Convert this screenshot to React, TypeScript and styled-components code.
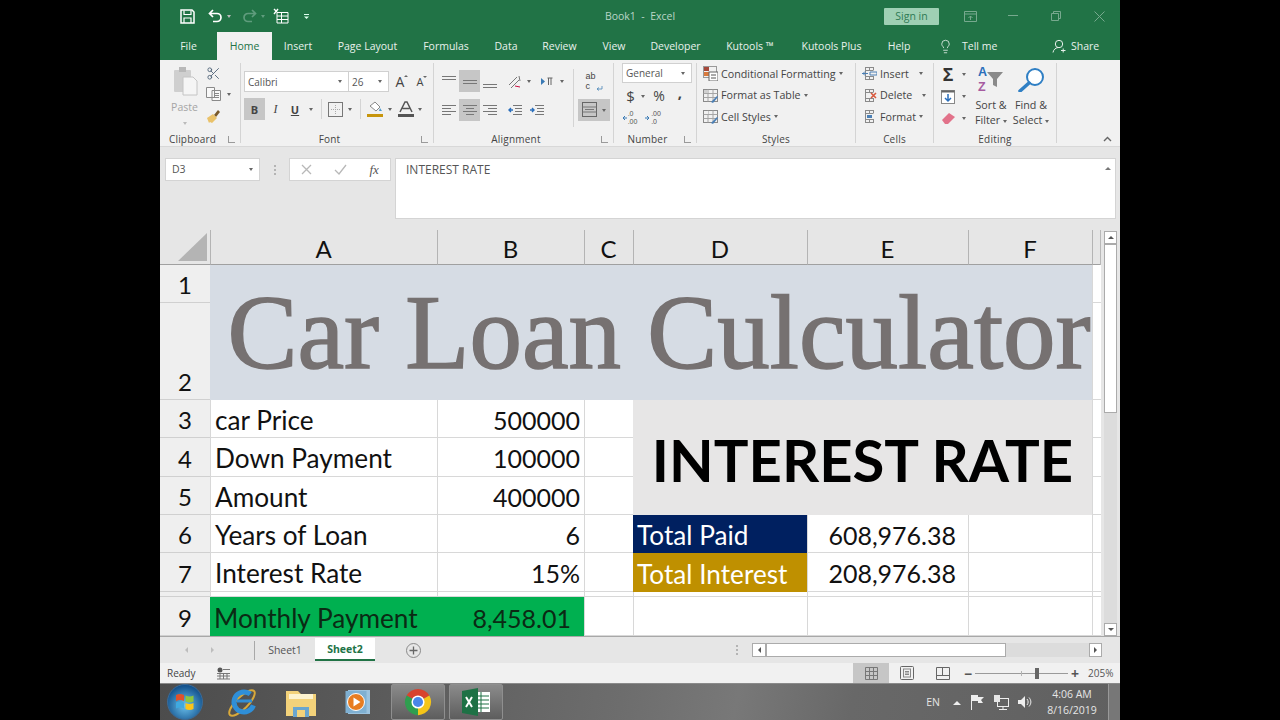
import React from "react";
import styled, { createGlobalStyle } from "styled-components";
import { Lightbulb, Scissors } from "lucide-react";

const GlobalStyle = createGlobalStyle`
html, body {
  margin: 0;
  padding: 0;
  background: #000;
  overflow: hidden;
}
`;

const UI_FONT = `"Open Sans", "Noto Sans", sans-serif`;
const CELL_FONT = `Lato, "Open Sans", sans-serif`;

const Ico = ({ w, h = w, vb, children }: { w: number; h?: number; vb?: string; children: React.ReactNode }) => (
  <svg width={w} height={h} viewBox={vb ?? `0 0 ${w} ${h}`} fill="none" style={{ display: "block", flex: "none" }}>
    {children}
  </svg>
);

const ALIGN_ICONS: Record<string, number[][]> = {
  top: [[0, 14, 2], [0, 14, 5]],
  middle: [[0, 14, 6], [0, 14, 9]],
  bottom: [[0, 14, 10], [0, 14, 13]],
  left: [[0, 14, 2], [0, 9, 5], [0, 14, 8], [0, 9, 11]],
  center: [[0, 14, 2], [3, 11, 5], [0, 14, 8], [3, 11, 11]],
  right: [[0, 14, 2], [5, 14, 5], [0, 14, 8], [5, 14, 11]],
};

const AlignIcon = ({ kind }: { kind: string }) => (
  <Ico w={14} h={14}>
    {ALIGN_ICONS[kind].map(([a, b, y]) => (
      <line key={y} x1={a} x2={b} y1={y + 0.5} y2={y + 0.5} stroke="#777" />
    ))}
  </Ico>
);

const StyleIcon = ({ accent }: { accent: string }) => (
  <Ico w={15} h={15}>
    <rect x="0.5" y="1.5" width="14" height="12" stroke="#8a8a8a" />
    <path d="M0.5 5.5h14M5 1.5v12M10 1.5v12M.5 9.5h14" stroke="#a5a5a5" />
    <rect x="1" y="2" width="4" height="3" fill={accent} />
    <path d="M8 14l6-6 1 1-5 6z" fill="#4a7fb5" />
  </Ico>
);

const CellsIcon = ({ kind }: { kind: string }) => (
  <Ico w={15} h={15}>
    <path d="M3.5 1.5h8M3.5 4.5h8M3.5 10.5h8M3.5 13.5h8M3.5 1v13M7.5 1v3M11.5 1v3M7.5 10v4M11.5 10v4" stroke="#8a8a8a" />
    {kind === "insert" && <path d="M0 7.5h6M3 5.5L1 7.5l2 2M8 6h7v3H8z" stroke="#4a7fb5" />}
    {kind === "delete" && <path d="M9 5l5 5M14 5l-5 5" stroke="#d9593d" strokeWidth="1.6" />}
    {kind === "format" && <rect x="5" y="6" width="5" height="3" fill="#4a7fb5" />}
  </Ico>
);

const Indent = ({ flip }: { flip?: boolean }) => (
  <Ico w={15} h={12}>
    <path d="M6 1.5h9M8 4.5h7M8 7.5h7M6 10.5h9" stroke="#777" />
    <path d={flip ? "M1 6h4M3 4l2 2-2 2" : "M2 6h4M4 4L2 6l2 2"} stroke="#2a6ebb" strokeWidth="1.4" />
  </Ico>
);

const Caret = styled.span<{ $light?: boolean; $mx?: number; $inline?: boolean }>`
flex: none;
display: ${p => (p.$inline ? "inline-block" : "block")};
vertical-align: middle;
width: 0;
height: 0;
margin: 0 ${p => p.$mx ?? 0}px;
border-left: 2.5px solid transparent;
border-right: 2.5px solid transparent;
border-top: 3px solid ${p => (p.$light ? "#bbb" : "#666")};
`;

const Page = styled.div`
display: flex;
justify-content: center;
width: 1280px;
height: 720px;
background: #000;
`;

const Screen = styled.div`
display: flex;
flex-direction: column;
width: 960px;
height: 720px;
background: #e6e6e6;
font-family: ${UI_FONT};
overflow: hidden;
`;

const TitleBar = styled.div`
display: grid;
grid-template-columns: 1fr auto 1fr;
align-items: center;
height: 32px;
background: #217346;
color: #b9d6c6;
font-size: 10.5px;
`;

const Quick = styled.div`
display: flex;
align-items: center;
gap: 5px;
padding-left: 20px;
`;

const QuickBtn = styled.div<{ $ml: number; $w?: number }>`
display: flex;
align-items: center;
justify-content: center;
width: ${p => p.$w ?? 14}px;
height: 16px;
margin-left: ${p => p.$ml}px;
`;

const WindowControls = styled.div`
display: flex;
align-items: center;
justify-content: flex-end;
`;

const SignIn = styled.div`
display: flex;
align-items: center;
justify-content: center;
width: 55px;
height: 17px;
margin-right: 9px;
background: #9fd0b4;
border-radius: 1px;
color: #2f7a55;
font-size: 10.5px;
`;

const WinBtn = styled.div<{ $w: number }>`
display: flex;
align-items: center;
justify-content: center;
width: ${p => p.$w}px;
height: 28px;
`;

const Tabs = styled.div`
display: flex;
align-items: stretch;
height: 28px;
background: #217346;
`;

const Tab = styled.div<{ $w: number; $on?: boolean }>`
display: flex;
align-items: center;
justify-content: center;
width: ${p => p.$w}px;
background: ${p => (p.$on ? "#f1f1f1" : "transparent")};
color: ${p => (p.$on ? "#217346" : "#e8f1ec")};
font-size: 10.5px;
white-space: nowrap;
`;

const ShareBox = styled.div`
display: flex;
align-items: center;
gap: 5px;
margin-left: 39px;
color: #e8f1ec;
font-size: 10.5px;
`;

const TellMe = styled(ShareBox)`
width: 75px;
margin-left: 14px;
gap: 9px;
`;

const Ribbon = styled.div`
display: flex;
height: 87px;
background: #f1f1f1;
border-bottom: 1px solid #d8d8d8;
box-sizing: border-box;
color: #444;
font-size: 10.5px;
`;

const Group = styled.div<{ $w: number; $flat?: boolean }>`
position: relative;
display: flex;
flex-direction: column;
width: ${p => p.$w}px;
height: 80px;
margin-top: 3px;
box-sizing: border-box;
border-right: ${p => (p.$flat ? "none" : "1px solid #d4d4d4")};
`;

const GroupBody = styled.div<{ $pl?: number; $gap?: number }>`
display: flex;
flex: none;
height: 66px;
gap: ${p => p.$gap ?? 0}px;
padding-left: ${p => p.$pl ?? 0}px;
`;

const GroupLabel = styled.div<{ $launcher?: boolean }>`
height: 14px;
margin-top: 3px;
padding-right: ${p => (p.$launcher ? 15 : 0)}px;
line-height: 14px;
text-align: center;
font-size: 10px;
letter-spacing: 0.2px;
color: #444;
`;

const Launcher = styled.span`
position: absolute;
right: 5px;
bottom: 0;
width: 6px;
height: 6px;
border-left: 1px solid #9a9a9a;
border-bottom: 1px solid #9a9a9a;
`;

const Column = styled.div<{ $w?: number; $gap?: number; $pt?: number; $center?: boolean; $ml?: number }>`
display: flex;
flex-direction: column;
align-items: ${p => (p.$center ? "center" : "stretch")};
width: ${p => (p.$w ? `${p.$w}px` : "auto")};
gap: ${p => p.$gap ?? 0}px;
padding-top: ${p => p.$pt ?? 0}px;
margin-left: ${p => p.$ml ?? 0}px;
`;

const Row = styled.div<{ $h?: number; $gap?: number; $mt?: number }>`
display: flex;
align-items: center;
height: ${p => p.$h ?? 22}px;
gap: ${p => p.$gap ?? 0}px;
margin-top: ${p => p.$mt ?? 0}px;
`;

const Btn = styled.div<{ $w: number; $on?: boolean; $h?: number; $ml?: number }>`
display: flex;
align-items: center;
justify-content: center;
flex: none;
gap: 4px;
width: ${p => p.$w}px;
height: ${p => p.$h ?? 22}px;
margin-left: ${p => p.$ml ?? 0}px;
background: ${p => (p.$on ? "#c6c6c6" : "transparent")};
`;

const PasteLabel = styled.div`
display: flex;
flex-direction: column;
align-items: center;
gap: 8px;
margin-top: 4px;
color: #a5a5a5;
font-size: 10.5px;
`;

const Combo = styled.div<{ $w: number; $h?: number; $joined?: boolean }>`
display: flex;
align-items: center;
justify-content: space-between;
width: ${p => p.$w}px;
height: ${p => p.$h ?? 21}px;
padding: 0 6px 0 3px;
box-sizing: border-box;
background: #fff;
border: 1px solid #d0d0d0;
${p => (p.$joined ? "border-left: none;" : "")}
color: #555;
font-size: 10px;
`;

const FontLetter = styled.span<{ $c?: string; $fs?: number; $w?: number; $i?: boolean; $u?: boolean; $serif?: boolean; $mb?: number }>`
color: ${p => p.$c ?? "#444"};
font-family: ${p => (p.$serif ? `"Liberation Serif", serif` : UI_FONT)};
font-size: ${p => p.$fs ?? 12}px;
font-weight: ${p => p.$w ?? 400};
font-style: ${p => (p.$i ? "italic" : "normal")};
text-decoration: ${p => (p.$u ? "underline" : "none")};
line-height: 1;
margin-bottom: ${p => p.$mb ?? 0}px;
`;

const GrowFont = styled.div`
position: relative;
display: flex;
justify-content: center;
`;

const GrowMark = styled.span<{ $down?: boolean }>`
position: absolute;
top: 0;
right: -4px;
width: 0;
height: 0;
border-left: 2px solid transparent;
border-right: 2px solid transparent;
${p => (p.$down ? "border-top: 2px solid #666;" : "border-bottom: 2px solid #666;")}
`;

const RibbonSep = styled.span<{ $mx?: number; $tall?: boolean }>`
flex: none;
width: 1px;
height: ${p => (p.$tall ? 58 : 20)}px;
margin: ${p => (p.$tall ? 6 : 0)}px ${p => p.$mx ?? 0}px 0;
background: #d4d4d4;
`;

const Stack = styled.div<{ $fs: number; $lh: number; $c?: string; $w?: number }>`
display: flex;
flex-direction: column;
flex: none;
color: ${p => p.$c ?? "#444"};
font-family: "Liberation Sans", sans-serif;
font-size: ${p => p.$fs}px;
font-weight: ${p => p.$w ?? 400};
line-height: ${p => p.$lh}px;
`;

const WrapIcon = styled.div`
display: flex;
align-items: flex-end;
gap: 1px;
`;

const DecIcon = styled.div`
display: flex;
align-items: center;
gap: 1px;
`;

const SortIcon = styled.div`
display: flex;
align-items: center;
height: 25px;
`;

const SortLetter = styled.span<{ $c: string }>`
display: block;
color: ${p => p.$c};
`;

const ListItem = styled.div`
display: flex;
align-items: center;
gap: 3px;
height: 21.5px;
white-space: nowrap;
color: #444;
font-size: 10.7px;
`;

const BigLabel = styled.div`
margin-top: 6px;
line-height: 15px;
text-align: center;
white-space: nowrap;
color: #444;
font-size: 10.7px;
`;

const Collapse = styled.span`
position: absolute;
right: 8px;
bottom: 1px;
`;

const FormulaArea = styled.div`
display: flex;
align-items: flex-start;
height: 83px;
padding-top: 11px;
box-sizing: border-box;
background: #e6e6e6;
`;

const NameBox = styled.div`
display: flex;
align-items: center;
justify-content: space-between;
width: 95px;
height: 23px;
margin-left: 5px;
padding: 0 6px 1px;
box-sizing: border-box;
background: #fff;
border: 1px solid #d4d4d4;
color: #555;
font-size: 10.5px;
`;

const GripDots = styled.div`
display: flex;
flex-direction: column;
align-items: center;
justify-content: center;
gap: 2px;
width: 29px;
height: 23px;
`;

const Dot = styled.span`
width: 2px;
height: 2px;
background: #b4b4b4;
`;

const FormulaButtons = styled.div`
display: flex;
align-items: center;
justify-content: space-around;
width: 102px;
height: 23px;
box-sizing: border-box;
background: #fff;
border: 1px solid #d4d4d4;
`;

const FormulaInput = styled.div`
position: relative;
width: 721px;
height: 61px;
margin-left: 4px;
padding: 2px 10px;
box-sizing: border-box;
background: #fff;
border: 1px solid #d4d4d4;
color: #555;
font-size: 12px;
`;

const FormulaCaret = styled.span`
position: absolute;
top: 8px;
right: 4px;
width: 0;
height: 0;
border-left: 3px solid transparent;
border-right: 3px solid transparent;
border-bottom: 3px solid #777;
`;

const SheetArea = styled.div`
display: flex;
height: 406px;
`;

const Grid = styled.div`
display: grid;
grid-template-columns: 50px 227px 147px 49px 174px 161px 124px 8px;
grid-template-rows: 35px 38px 97px 38px 39px 38px 38px 39px 5px 39px;
width: 941px;
background: #fff;
border-right: 1px solid #b8b8b8;
box-sizing: border-box;
`;

const Corner = styled.div`
display: flex;
align-items: flex-end;
justify-content: flex-end;
padding: 0 3px 3px 0;
background: #e6e6e6;
border-bottom: 1px solid #a0a0a0;
box-sizing: border-box;
`;

const Triangle = styled.span`
width: 29px;
height: 28px;
background: #b4b4b4;
clip-path: polygon(100% 0, 100% 100%, 0 100%);
`;

const ColHead = styled.div`
display: flex;
align-items: center;
justify-content: center;
box-sizing: border-box;
padding: 3px 1px 0 0;
background: #e6e6e6;
border-bottom: 1px solid #a0a0a0;
border-left: 1px solid #b4b4b4;
color: #111;
font-family: ${CELL_FONT};
font-size: 24px;
`;

const RowHead = styled.div`
display: flex;
align-items: flex-end;
justify-content: center;
box-sizing: border-box;
padding-bottom: 2px;
background: #efefef;
border-bottom: 1px solid #d0d0d0;
color: #111;
font-family: ${CELL_FONT};
font-size: 24px;
line-height: 30px;
overflow: hidden;
`;

const Cell = styled.div<{ $bg?: string; $c?: string; $right?: boolean; $pr?: number }>`
display: flex;
align-items: center;
justify-content: ${p => (p.$right ? "flex-end" : "flex-start")};
padding: 2px ${p => p.$pr ?? 4}px 0 4px;
box-sizing: border-box;
background: ${p => p.$bg ?? "#fff"};
border-bottom: ${p => (p.$bg ? "none" : "1px solid #d8d8d8")};
border-left: ${p => (p.$bg ? "none" : "1px solid #d8d8d8")};
color: ${p => p.$c ?? "#111"};
font-family: ${CELL_FONT};
font-size: ${p => (p.$right ? 25 : 26.2)}px;
white-space: nowrap;
overflow: hidden;
`;

const TitleCell = styled.div`
grid-column: 2 / 8;
grid-row: 2 / 4;
display: flex;
align-items: flex-end;
justify-content: center;
padding: 0 0 15px 16px;
box-sizing: border-box;
background: #d6dce4;
color: #767171;
font-family: "Liberation Serif", serif;
font-size: 105px;
line-height: 1;
-webkit-text-stroke: 1.5px #767171;
white-space: nowrap;
overflow: hidden;
`;

const RateCell = styled.div`
grid-column: 5 / 8;
grid-row: 4 / 7;
display: flex;
align-items: center;
justify-content: center;
padding-top: 3px;
box-sizing: border-box;
background: #e7e6e6;
color: #000;
font-family: ${CELL_FONT};
font-size: 58px;
font-weight: 700;
white-space: nowrap;
`;

const VScroll = styled.div`
display: flex;
flex-direction: column;
align-items: center;
width: 19px;
padding-top: 1px;
box-sizing: border-box;
`;

const ScrollBtn = styled.div<{ $w?: number; $h?: number }>`
display: flex;
align-items: center;
justify-content: center;
flex: none;
width: ${p => p.$w ?? 13}px;
height: ${p => p.$h ?? 13}px;
box-sizing: border-box;
background: #fff;
border: 1px solid #ababab;
`;

const ArrowUp = styled.span<{ $down?: boolean }>`
width: 0;
height: 0;
border-left: 3px solid transparent;
border-right: 3px solid transparent;
${p => (p.$down ? "border-top: 3px solid #555;" : "border-bottom: 3px solid #555;")}
`;

const ArrowSide = styled.span<{ $right?: boolean; $dim?: boolean }>`
width: 0;
height: 0;
border-top: 3px solid transparent;
border-bottom: 3px solid transparent;
${p => `border-${p.$right ? "left" : "right"}: 3px solid ${p.$dim ? "#bdbdbd" : "#555"};`}
`;

const VThumb = styled.div`
flex: none;
width: 13px;
height: 169px;
box-sizing: border-box;
background: #fff;
border: 1px solid #ababab;
`;

const VTrack = styled.div`
flex: 1;
width: 13px;
background: #dcdcdc;
`;

const SheetBar = styled.div`
display: flex;
align-items: center;
height: 27px;
background: #e6e6e6;
border-top: 1px solid #a8a8a8;
box-sizing: border-box;
`;

const SheetNav = styled.div`
display: flex;
align-items: center;
gap: 23px;
width: 95px;
padding-left: 25px;
box-sizing: border-box;
height: 19px;
border-right: 1px solid #a8a8a8;
`;

const SheetTab = styled.div<{ $on?: boolean }>`
display: flex;
align-items: center;
justify-content: center;
width: 60px;
height: 23px;
margin-top: ${p => (p.$on ? "-1px" : "0")};
box-sizing: border-box;
background: ${p => (p.$on ? "#fff" : "transparent")};
border-bottom: ${p => (p.$on ? "2px solid #217346" : "none")};
color: ${p => (p.$on ? "#217346" : "#555")};
font-size: 10.5px;
font-weight: ${p => (p.$on ? 700 : 400)};
`;

const AddSheet = styled.div`
display: flex;
margin-left: 31px;
`;

const HGrip = styled(GripDots)`
width: 15px;
margin: 0 8px 0 308px;
`;

const HScroll = styled.div`
display: flex;
align-items: center;
width: 350px;
height: 14px;
`;

const HThumb = styled.div`
width: 240px;
height: 14px;
box-sizing: border-box;
background: #fff;
border: 1px solid #ababab;
`;

const HTrack = styled.div`
flex: 1;
height: 14px;
background: #dcdcdc;
`;

const StatusBar = styled.div`
display: flex;
align-items: center;
height: 20px;
padding-left: 7px;
background: #f1f1f1;
color: #444;
font-size: 10px;
`;

const StatusRight = styled.div`
display: flex;
align-items: center;
height: 20px;
margin-left: auto;
`;

const ViewBtn = styled.div<{ $on?: boolean }>`
display: flex;
align-items: center;
justify-content: center;
width: 36px;
height: 20px;
background: ${p => (p.$on ? "#c6c6c6" : "transparent")};
`;

const Zoom = styled.div`
display: flex;
align-items: center;
gap: 3px;
width: 122px;
padding-left: 3px;
box-sizing: border-box;
color: #555;
font-size: 14px;
font-weight: 700;
`;

const ZoomTrack = styled.div`
position: relative;
flex: none;
width: 93px;
height: 1px;
background: #9a9a9a;
`;

const ZoomTick = styled.span`
position: absolute;
left: 46px;
top: -2px;
width: 1px;
height: 5px;
background: #b4b4b4;
`;

const ZoomKnob = styled.span`
position: absolute;
left: 60px;
top: -5px;
width: 4px;
height: 11px;
background: #666;
`;

const ZoomText = styled.div`
width: 32px;
margin-left: 5px;
color: #555;
font-size: 10px;
`;

const Taskbar = styled.div`
display: flex;
align-items: center;
height: 37px;
box-sizing: border-box;
border-top: 1px solid #8a8a8a;
background: linear-gradient(100deg, #4c4c4c 0%, #5c5c5c 25%, #6d6d6d 48%, #787878 60%, #686868 72%, #606060 100%);
color: #e6e6e6;
`;

const TaskIcon = styled.div<{ $w: number }>`
display: flex;
align-items: center;
justify-content: center;
width: ${p => p.$w}px;
height: 36px;
`;

const TaskButton = styled(TaskIcon)<{ $ml?: number }>`
margin-left: ${p => p.$ml ?? 0}px;
box-sizing: border-box;
border: 1px solid #8f8f8f;
border-radius: 2px;
background: linear-gradient(180deg, #8b8b8b, #5d5d5d);
`;

const Tray = styled.div`
display: flex;
align-items: center;
gap: 9px;
margin-left: auto;
font-size: 10.5px;
`;

const TrayLang = styled.span`
margin-right: 4px;
`;

const Clock = styled.div`
width: 60px;
margin-left: 1px;
text-align: center;
line-height: 16px;
font-size: 10.5px;
`;

const ShowDesktop = styled.div`
width: 12px;
height: 36px;
margin-left: 6px;
box-sizing: border-box;
background: #777;
border-left: 1px solid #999;
`;

const TAB_LIST = [
  ["File", 57], ["Home", 55], ["Insert", 52], ["Page Layout", 87], ["Formulas", 70], ["Data", 50],
  ["Review", 57], ["View", 52], ["Developer", 71], ["Kutools ™", 78], ["Kutools Plus", 85], ["Help", 50],
] as const;

const COLUMNS = ["A", "B", "C", "D", "E", "F", ""];

type RowCell = { t?: string; right?: boolean; bg?: string; c?: string; pr?: number };
const ROWS: { n: string; cells: RowCell[] }[] = [
  { n: "1", cells: [{}] },
  { n: "2", cells: [{}] },
  { n: "3", cells: [{ t: "car Price" }, { t: "500000", right: true }, {}, {}] },
  { n: "4", cells: [{ t: "Down Payment" }, { t: "100000", right: true }, {}, {}] },
  { n: "5", cells: [{ t: "Amount" }, { t: "400000", right: true }, {}, {}] },
  {
    n: "6",
    cells: [{ t: "Years of Loan" }, { t: "6", right: true }, {}, { t: "Total Paid", bg: "#002060", c: "#fff" },
      { t: "608,976.38", right: true, pr: 12 }, {}, {}],
  },
  {
    n: "7",
    cells: [{ t: "Interest Rate" }, { t: "15%", right: true }, {}, { t: "Total Interest", bg: "#bf9000", c: "#fff" },
      { t: "208,976.38", right: true, pr: 12 }, {}, {}],
  },
  { n: "", cells: [{}, {}, {}, {}, {}, {}, {}] },
  {
    n: "9",
    cells: [{ t: "Monthly Payment", bg: "#00b050", c: "#0b2a14" },
      { t: "8,458.01", right: true, bg: "#00b050", c: "#0b2a14", pr: 13 },
      {}, {}, {}, {}, {}],
  },
];

const Chrome = () => (
  <Ico w={30} h={30} vb="0 0 32 32">
    <path d="M3.9 9A14 14 0 0 1 28.1 9L16 16z" fill="#d8432e" />
    <path d="M28.1 9A14 14 0 0 1 16 30L16 16z" fill="#f5c518" />
    <path d="M16 30A14 14 0 0 1 3.9 9L16 16z" fill="#2f9e4f" />
    <circle cx="16" cy="16" r="7" fill="#fff" />
    <circle cx="16" cy="16" r="5.4" fill="#4a86e8" />
  </Ico>
);

const WindowsOrb = () => (
  <Ico w={36} h={36}>
    <defs>
      <radialGradient id="orb" cx="50%" cy="60%" r="60%">
        <stop offset="0%" stopColor="#6cc3ee" />
        <stop offset="100%" stopColor="#0d4a86" />
      </radialGradient>
    </defs>
    <circle cx="18" cy="18" r="17.5" fill="url(#orb)" stroke="#3c6b96" />
    <path d="M9 11q4-2 8 0v6q-4-2-8 0z" fill="#e0512b" />
    <path d="M18.5 11.5q4 2 8 0v6q-4 2-8 0z" fill="#8dc63f" />
    <path d="M9 18.5q4-2 8 0v6q-4-2-8 0z" fill="#3fa9e0" />
    <path d="M18.5 19q4 2 8 0v6q-4 2-8 0z" fill="#fcc419" />
  </Ico>
);

const IeLogo = () => (
  <Ico w={32} h={32}>
    <ellipse cx="15" cy="17" rx="17" ry="6" transform="rotate(-45 15 17)" stroke="#d9a93a" strokeWidth="2" />
    <circle cx="17" cy="16" r="10" fill="none" stroke="#2f8fd8" strokeWidth="5" strokeDasharray="50 13" transform="rotate(20 17 16)" />
    <path d="M10 15h15" stroke="#2f8fd8" strokeWidth="3" />
  </Ico>
);

const FolderLogo = () => (
  <Ico w={32} h={30}>
    <path d="M1 4h12l3 3h15v22H1z" fill="#f3d27a" />
    <rect x="4" y="7" width="24" height="5" fill="#fdf3cf" />
    <rect x="8" y="20" width="16" height="10" fill="#6aa6cf" />
    <rect x="12" y="23" width="8" height="7" fill="#f3d27a" />
  </Ico>
);

const MediaLogo = () => (
  <Ico w={26} h={26}>
    <rect x="3" y="1" width="22" height="24" fill="#9cc3df" />
    <rect x="0.5" y="2" width="21" height="22" fill="#7fb0d2" />
    <circle cx="11" cy="13" r="8.5" fill="#e77d22" stroke="#fff" />
    <path d="M8.5 8.5l7 4.5-7 4.5z" fill="#fff" />
  </Ico>
);

const ExcelLogo = () => (
  <Ico w={32} h={30}>
    <rect x="14" y="5" width="16" height="20" fill="#fff" />
    <path d="M15 9h14M15 13h14M15 17h14M15 21h14M21 5v20" stroke="#1e7145" />
    <path d="M2 4l16-3v28L2 26z" fill="#1e7145" />
    <path d="M6 10l6 10M12 10l-6 10" stroke="#fff" strokeWidth="2" />
  </Ico>
);

const App = () => {
  return (
    <Page>
      <GlobalStyle />
      <Screen>
        <TitleBar>
          <Quick>
            <Ico w={15} h={15}>
              <path d="M1 1h11l2 2v11H1z" stroke="#fff" strokeWidth="1.5" />
              <path d="M4 1.5v4h7v-4M4 14V9h7v5" stroke="#fff" strokeWidth="1.2" />
            </Ico>
            <QuickBtn $ml={8}>
              <Ico w={15} h={14}>
                <path d="M5 1L1.5 4.5 5 8M2 4.5h7a4 4 0 0 1 0 8H5" stroke="#fff" strokeWidth="1.7" />
              </Ico>
            </QuickBtn>
            <Caret $light />
            <QuickBtn $ml={6}>
              <Ico w={15} h={14}>
                <path d="M10 1l3.5 3.5L10 8M13 4.5H6a4 4 0 0 0 0 8h4" stroke="#5f9c7d" strokeWidth="1.7" />
              </Ico>
            </QuickBtn>
            <Caret style={{ borderTopColor: "#5f9c7d" }} />
            <QuickBtn $ml={3} $w={16}>
              <Ico w={16} h={16}>
                <path d="M4 4.5h11V15H4zM4 8h11M4 11.5h11M8.5 4.5V15" stroke="#fff" />
                <path d="M1 1l3 3M5 1L1 6" stroke="#fff" strokeWidth="1.4" />
              </Ico>
            </QuickBtn>
            <QuickBtn $ml={9} $w={7}>
              <Ico w={7} h={7}>
                <path d="M1 1.5h5" stroke="#dfe" />
                <path d="M1 3.5h5L3.5 6z" fill="#dfe" />
              </Ico>
            </QuickBtn>
          </Quick>
          <div>Book1&nbsp; -&nbsp; Excel</div>
          <WindowControls>
            <SignIn>Sign in</SignIn>
            <WinBtn $w={44}>
              <Ico w={13} h={11}>
                <path d="M.5.5h12v10H.5zM.5 3h12M6.5 9V5M4.5 7l2-2 2 2" stroke="#77a98e" />
              </Ico>
            </WinBtn>
            <WinBtn $w={42}>
              <Ico w={10} h={2}><path d="M0 .5h10" stroke="#77a98e" /></Ico>
            </WinBtn>
            <WinBtn $w={44}>
              <Ico w={10} h={10}><path d="M.5 2.5h7v7h-7zM2.5 2.5v-2h7v7h-2" stroke="#77a98e" /></Ico>
            </WinBtn>
            <WinBtn $w={42}>
              <Ico w={11} h={11}><path d="M.5.5l10 10M10.5.5l-10 10" stroke="#77a98e" /></Ico>
            </WinBtn>
          </WindowControls>
        </TitleBar>

        <Tabs>
          {TAB_LIST.map(([name, w]) => (
            <Tab key={name} $w={w} $on={name === "Home"}>{name}</Tab>
          ))}
          <TellMe>
            <Lightbulb size={15} strokeWidth={1.3} color="#e8f1ec" />
            Tell me
          </TellMe>
          <ShareBox>
            <Ico w={14} h={14}>
              <circle cx="7" cy="5" r="3.7" stroke="#e8f1ec" />
              <path d="M1 13.5c.5-3 2.5-4.5 5-5M9 11.5h4.5M11.2 9.5v4" stroke="#e8f1ec" />
            </Ico>
            Share
          </ShareBox>
        </Tabs>

        <Ribbon>
          <Group $w={81}>
            <GroupBody $pl={8}>
              <Column $w={33} $pt={3}>
                <Btn $w={33} $h={30}>
                  <Ico w={28} h={30}>
                    <rect x="3" y="4" width="17" height="22" rx="1" fill="#cfcfcf" />
                    <rect x="8" y="1" width="7" height="5" fill="#b8b8b8" />
                    <path d="M12 11h10l4 4v14H12z" fill="#f5f5f5" stroke="#c4c4c4" />
                  </Ico>
                </Btn>
                <PasteLabel>
                  Paste
                  <Caret $light />
                </PasteLabel>
              </Column>
              <Column>
                <Btn $w={24} $h={20}><Scissors size={15} color="#4a5f75" strokeWidth={1.4} /></Btn>
                <Row>
                  <Btn $w={24}>
                    <Ico w={15} h={14}>
                      <path d="M.5.5h8v10h-8zM6 3.5h8.5v10H6z" stroke="#8a8a8a" fill="#f9f9f9" />
                      <path d="M8 6.5h5M8 8.5h5M8 10.5h5" stroke="#888" />
                    </Ico>
                  </Btn>
                  <Caret $mx={2} />
                </Row>
                <Btn $w={24}>
                  <Ico w={16} h={14}>
                    <path d="M9 6L13 1l2 2-4 5z" fill="#7a5a2a" />
                    <path d="M2 9l6-4 4 4-5 5-2-1-1 1z" fill="#eac26a" />
                  </Ico>
                </Btn>
              </Column>
            </GroupBody>
            <GroupLabel $launcher>Clipboard</GroupLabel>
            <Launcher />
          </Group>

          <Group $w={193}>
            <GroupBody $pl={3}>
              <Column $pt={8} $gap={6}>
                <Row $h={21}>
                  <Combo $w={105}>Calibri<Caret /></Combo>
                  <Combo $w={40} $joined>26<Caret /></Combo>
                  <Btn $w={22} $h={21}>
                    <GrowFont><FontLetter $fs={14}>A</FontLetter><GrowMark /></GrowFont>
                  </Btn>
                  <Btn $w={18} $h={21}>
                    <GrowFont><FontLetter $fs={11}>A</FontLetter><GrowMark $down /></GrowFont>
                  </Btn>
                </Row>
                <Row>
                  <Btn $w={21} $on><FontLetter $w={700} $fs={11}>B</FontLetter></Btn>
                  <Btn $w={21}><FontLetter $i $fs={12} $serif>I</FontLetter></Btn>
                  <Btn $w={18}><FontLetter $u $w={700} $fs={11}>U</FontLetter></Btn>
                  <Caret $mx={5} />
                  <RibbonSep $mx={3} />
                  <Btn $w={20}>
                    <Ico w={15} h={15}>
                      <rect x=".5" y=".5" width="14" height="14" stroke="#777" />
                      <path d="M7.5 3v9M3 7.5h9" stroke="#aaa" strokeDasharray="1 1" />
                    </Ico>
                  </Btn>
                  <Caret $mx={3} />
                  <RibbonSep $mx={5} />
                  <Btn $w={18}>
                    <Ico w={16} h={18}>
                      <path d="M3 6l5-4 5 5-4 4z" stroke="#888" fill="#fff" />
                      <path d="M13 8l2 3h-3z" fill="#4a9bd1" />
                      <rect y="14" width="16" height="3" fill="#c7950c" />
                    </Ico>
                  </Btn>
                  <Caret $mx={4} />
                  <Btn $w={20}>
                    <Ico w={16} h={18}>
                      <path d="M2 12L7 2h2l5 10M4.5 8.5h7" stroke="#555" strokeWidth="1.5" />
                      <rect y="14" width="16" height="3" fill="#555" />
                    </Ico>
                  </Btn>
                  <Caret $mx={2} />
                </Row>
              </Column>
            </GroupBody>
            <GroupLabel $launcher>Font</GroupLabel>
            <Launcher />
          </Group>

          <Group $w={180}>
            <GroupBody $pl={8}>
              <Column $pt={7} $gap={7} $w={131}>
                <Row>
                  <AlignIcon kind="top" />
                  <Btn $w={21} $ml={3} $on><AlignIcon kind="middle" /></Btn>
                  <Btn $w={20}><AlignIcon kind="bottom" /></Btn>
                  <Btn $w={24} $ml={2}>
                    <Ico w={15} h={15}>
                      <path d="M2 11L10 3M12 2l1 5M4 14l8-8" stroke="#777" />
                      <path d="M8 12l5 1" stroke="#c14" />
                    </Ico>
                  </Btn>
                  <Caret $mx={1} />
                  <Btn $w={26} $ml={2}>
                    <Ico w={12} h={9}>
                      <path d="M0 1l4 3.5L0 8z" fill="#3a7ab5" />
                      <path d="M6.5 1h5M7.5 1v7M10 1v7" stroke="#666" />
                    </Ico>
                  </Btn>
                  <Caret />
                </Row>
                <Row>
                  <AlignIcon kind="left" />
                  <Btn $w={21} $ml={3} $on><AlignIcon kind="center" /></Btn>
                  <Btn $w={20}><AlignIcon kind="right" /></Btn>
                  <Btn $w={24} $ml={2}><Indent /></Btn>
                  <Btn $w={20}><Indent flip /></Btn>
                </Row>
              </Column>
              <RibbonSep $tall />
              <Column $pt={7} $gap={7} $ml={4}>
                <Btn $w={32}>
                  <WrapIcon>
                    <Stack $fs={9} $lh={10.4}>
                      <span>ab</span>
                      <span>c</span>
                    </Stack>
                    <Ico w={6} h={6}><path d="M0 4h5V1M0 4l2-1.5M0 4l2 1.5" stroke="#4a86b8" strokeWidth=".8" /></Ico>
                  </WrapIcon>
                </Btn>
                <Btn $w={32} $on>
                  <Ico w={16} h={16}>
                    <rect x=".5" y=".5" width="14" height="14" stroke="#666" />
                    <path d="M.5 5h14M.5 10h14M3 7.5h9" stroke="#777" />
                  </Ico>
                  <Caret />
                </Btn>
              </Column>
            </GroupBody>
            <GroupLabel $launcher>Alignment</GroupLabel>
            <Launcher />
          </Group>

          <Group $w={83}>
            <GroupBody $pl={8}>
              <Column>
                <Combo $w={70} $h={20}>General<Caret /></Combo>
                <Row $h={22} $mt={2}>
                  <Btn $w={17}><FontLetter $fs={15}>$</FontLetter></Btn>
                  <Caret $mx={2} />
                  <Btn $w={24}><FontLetter $fs={14}>%</FontLetter></Btn>
                  <Btn $w={18}><FontLetter $fs={15} $w={700} $mb={8}>,</FontLetter></Btn>
                </Row>
                <Row $h={22}>
                  <Btn $w={15}>
                    <DecIcon>
                      <Ico w={5} h={6}><path d="M5 3H1M1 3l2-2M1 3l2 2" stroke="#3a7ab5" /></Ico>
                      <Stack $fs={7} $lh={8} $c="#555">
                        <span>.0</span>
                        <span>.00</span>
                      </Stack>
                    </DecIcon>
                  </Btn>
                  <Btn $w={22} $ml={5}>
                    <DecIcon>
                      <Ico w={5} h={6}><path d="M0 3h4M4 3L2 1M4 3L2 5" stroke="#3a7ab5" /></Ico>
                      <Stack $fs={7} $lh={8} $c="#555">
                        <span>.00</span>
                        <span>.0</span>
                      </Stack>
                    </DecIcon>
                  </Btn>
                </Row>
              </Column>
            </GroupBody>
            <GroupLabel $launcher>Number</GroupLabel>
            <Launcher />
          </Group>

          <Group $w={159}>
            <GroupBody $pl={6}>
              <Column>
                <ListItem>
                  <Ico w={15} h={15}>
                    <rect x=".5" y=".5" width="13" height="11" stroke="#999" />
                    <rect x="1" y="1" width="5" height="4" fill="#a5483a" />
                    <rect x="1" y="6" width="5" height="4" fill="#d97a3d" />
                    <rect x="6" y="6" width="9" height="9" fill="#fff" stroke="#666" />
                    <path d="M8 9h5M8 12h5" stroke="#555" />
                  </Ico>
                  Conditional Formatting<Caret />
                </ListItem>
                <ListItem><StyleIcon accent="#d0d0d0" />Format as Table<Caret /></ListItem>
                <ListItem><StyleIcon accent="#f1f1f1" />Cell Styles<Caret /></ListItem>
              </Column>
            </GroupBody>
            <GroupLabel>Styles</GroupLabel>
          </Group>

          <Group $w={78}>
            <GroupBody $pl={6}>
              <Column>
                <ListItem><CellsIcon kind="insert" />Insert<Caret $mx={7} /></ListItem>
                <ListItem><CellsIcon kind="delete" />Delete<Caret $mx={7} /></ListItem>
                <ListItem><CellsIcon kind="format" />Format<Caret /></ListItem>
              </Column>
            </GroupBody>
            <GroupLabel>Cells</GroupLabel>
          </Group>

          <Group $w={123}>
            <GroupBody $pl={6}>
              <Column $w={35}>
                <Row>
                  <Btn $w={16} $h={20}><FontLetter $fs={18} $w={700} $c="#333">Σ</FontLetter></Btn>
                  <Caret $mx={6} />
                </Row>
                <Row>
                  <Btn $w={16} $h={20}>
                    <Ico w={14} h={15}>
                      <rect x=".5" y="1.5" width="13" height="13" stroke="#888" fill="#fff" />
                      <path d="M.5 1.5h13v2H.5z" fill="#666" />
                      <path d="M7 5v7M4 9l3 3 3-3" stroke="#2a6ebb" strokeWidth="1.5" />
                    </Ico>
                  </Btn>
                  <Caret $mx={6} />
                </Row>
                <Row>
                  <Btn $w={16} $h={20}>
                    <Ico w={13} h={11}><path d="M0 7l7-7 6 4-7 7H3z" fill="#e2728a" /></Ico>
                  </Btn>
                  <Caret $mx={6} />
                </Row>
              </Column>
              <Column $w={40} $pt={4} $ml={-4} $center>
                <SortIcon>
                  <Stack $fs={12.5} $lh={14.4} $w={700}>
                    <SortLetter $c="#2a6ebb">A</SortLetter>
                    <SortLetter $c="#a65ba0">Z</SortLetter>
                  </Stack>
                  <Ico w={17} h={17}><path d="M0 1h16l-6 7v8l-4-2V8z" fill="#8a8a8a" /></Ico>
                </SortIcon>
                <BigLabel>Sort &amp;<br />Filter <Caret $inline /></BigLabel>
              </Column>
              <Column $w={40} $pt={4} $center>
                <Ico w={28} h={25}>
                  <circle cx="18" cy="10" r="8" stroke="#2f7fc4" strokeWidth="2" fill="#fff" />
                  <path d="M12 16L3 24" stroke="#2f7fc4" strokeWidth="3.5" strokeLinecap="round" />
                </Ico>
                <BigLabel>Find &amp;<br />Select <Caret $inline /></BigLabel>
              </Column>
            </GroupBody>
            <GroupLabel>Editing</GroupLabel>
          </Group>

          <Group $w={63} $flat>
            <Collapse>
              <Ico w={9} h={6}><path d="M1 5l3.5-3.5L8 5" stroke="#666" strokeWidth="1.4" /></Ico>
            </Collapse>
          </Group>
        </Ribbon>

        <FormulaArea>
          <NameBox>D3<Caret /></NameBox>
          <GripDots><Dot /><Dot /><Dot /></GripDots>
          <FormulaButtons>
            <Ico w={11} h={11}><path d="M1 1l9 9M10 1l-9 9" stroke="#b8b8b8" strokeWidth="1.3" /></Ico>
            <Ico w={13} h={11}><path d="M1 6l4 4 7-9" stroke="#b8b8b8" strokeWidth="1.3" /></Ico>
            <FontLetter $i $serif $fs={13} $c="#555">fx</FontLetter>
          </FormulaButtons>
          <FormulaInput>
            INTEREST RATE
            <FormulaCaret />
          </FormulaInput>
        </FormulaArea>

        <SheetArea>
          <Grid>
            <Corner><Triangle /></Corner>
            {COLUMNS.map((c, i) => <ColHead key={i}>{c}</ColHead>)}
            <TitleCell>Car Loan Culculator</TitleCell>
            <RateCell>INTEREST RATE</RateCell>
            {ROWS.map(r => (
              <React.Fragment key={r.n || "8"}>
                <RowHead>{r.n}</RowHead>
                {r.cells.map((cell, i) => (
                  <Cell key={i} $right={cell.right} $bg={cell.bg} $c={cell.c} $pr={cell.pr}>{cell.t}</Cell>
                ))}
              </React.Fragment>
            ))}
          </Grid>
          <VScroll>
            <ScrollBtn><ArrowUp /></ScrollBtn>
            <VThumb />
            <VTrack />
            <ScrollBtn><ArrowUp $down /></ScrollBtn>
          </VScroll>
        </SheetArea>

        <SheetBar>
          <SheetNav>
            <ArrowSide $dim />
            <ArrowSide $right $dim />
          </SheetNav>
          <SheetTab>Sheet1</SheetTab>
          <SheetTab $on>Sheet2</SheetTab>
          <AddSheet>
            <Ico w={15} h={15}>
              <circle cx="7.5" cy="7.5" r="7" stroke="#8a8a8a" />
              <path d="M7.5 3.5v8M3.5 7.5h8" stroke="#666" strokeWidth="1.3" />
            </Ico>
          </AddSheet>
          <HGrip><Dot /><Dot /><Dot /></HGrip>
          <HScroll>
            <ScrollBtn $w={14} $h={14}><ArrowSide /></ScrollBtn>
            <HThumb />
            <HTrack />
            <ScrollBtn $w={13} $h={14}><ArrowSide $right /></ScrollBtn>
          </HScroll>
        </SheetBar>

        <StatusBar>
          Ready
          <Btn $w={14} $h={14} $ml={21}>
            <Ico w={13} h={13}>
              <circle cx="3" cy="3" r="2.5" fill="#555" />
              <path d="M6 2.5h7M0 6.5h13M0 9h13M0 12h13M3 6.5V12M6.5 6.5V12M10 6.5V12" stroke="#777" />
            </Ico>
          </Btn>
          <StatusRight>
            <ViewBtn $on>
              <Ico w={13} h={13}>
                <path d="M.5.5h12v12H.5zM.5 4.5h12M.5 8.5h12M4.5.5v12M8.5.5v12" stroke="#777" />
              </Ico>
            </ViewBtn>
            <ViewBtn>
              <Ico w={14} h={14}>
                <rect x=".5" y=".5" width="13" height="13" rx="1" stroke="#666" />
                <rect x="3.5" y="3" width="7" height="8" stroke="#888" />
                <path d="M5 5.5h4M5 7h4M5 8.5h4" stroke="#888" />
              </Ico>
            </ViewBtn>
            <ViewBtn>
              <Ico w={14} h={13}>
                <path d="M.5.5h13v12H.5zM.5 8.5h13M6.5.5v8" stroke="#666" />
              </Ico>
            </ViewBtn>
            <Zoom>
              −
              <ZoomTrack><ZoomTick /><ZoomKnob /></ZoomTrack>
              +
            </Zoom>
            <ZoomText>205%</ZoomText>
          </StatusRight>
        </StatusBar>

        <Taskbar>
          <TaskIcon $w={50}><WindowsOrb /></TaskIcon>
          <TaskIcon $w={66}><IeLogo /></TaskIcon>
          <TaskIcon $w={50}><FolderLogo /></TaskIcon>
          <TaskIcon $w={64}><MediaLogo /></TaskIcon>
          <TaskButton $w={54} $ml={1}><Chrome /></TaskButton>
          <TaskButton $w={54} $ml={4}><ExcelLogo /></TaskButton>
          <Tray>
            <TrayLang>EN</TrayLang>
            <Ico w={8} h={5}><path d="M0 5l4-4 4 4z" fill="#eee" /></Ico>
            <Ico w={15} h={16}>
              <path d="M1.5 1v15" stroke="#eee" />
              <path d="M2 1h6v2h6l-3 3 2 3H8V7H2z" fill="#eee" />
            </Ico>
            <Ico w={15} h={15}>
              <rect x="3.5" y="3.5" width="11" height="8" stroke="#eee" />
              <rect x="0" y="0" width="6" height="7" fill="#e6e6e6" />
              <path d="M5 14.5h8M9 12v2" stroke="#eee" />
            </Ico>
            <Ico w={14} h={14}>
              <path d="M0 5h3l4-4v12l-4-4H0z" fill="#eee" />
              <path d="M9 4c1.5 2 1.5 4 0 6M11 2.5c2.5 3 2.5 6 0 9" stroke="#eee" />
            </Ico>
            <Clock>4:06 AM<br />8/16/2019</Clock>
          </Tray>
          <ShowDesktop />
        </Taskbar>
      </Screen>
    </Page>
  );
};

export default App;
